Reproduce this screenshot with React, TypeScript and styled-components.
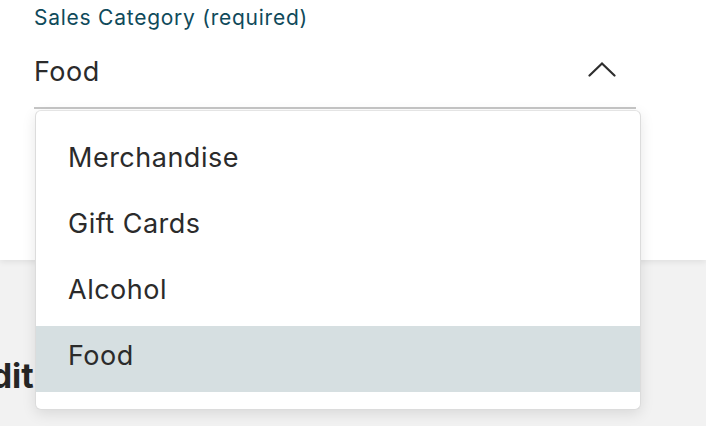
import React from "react";
import styled, { createGlobalStyle } from "styled-components";

const Global = createGlobalStyle`
  html, body { margin: 0; padding: 0; }
  body {
    background: #f2f2f2;
    font-family: Inter, "Noto Sans", "Liberation Sans", sans-serif;
    color: #2e2e2e;
    overflow: hidden;
  }
`;

const Page = styled.div`
  position: relative;
  width: 706px;
  height: 426px;
  overflow: hidden;
`;

const TopCard = styled.section`
  background: #ffffff;
  height: 260px;
  box-sizing: border-box;
  padding: 6px 70px 0 34px;
  box-shadow: 0 2px 6px rgba(0, 0, 0, 0.08);
  position: relative;
  z-index: 1;
`;

const Field = styled.div`
  width: 602px;
`;

const Label = styled.div`
  font-size: 21px;
  line-height: 24px;
  color: #0f4a5b;
  letter-spacing: 0.75px;
`;

const Trigger = styled.div`
  display: flex;
  align-items: flex-start;
  justify-content: space-between;
  height: 79px;
  box-sizing: border-box;
  padding: 0 20px 0 0;
  border-bottom: 2px solid #c6c6c6;
`;

const Value = styled.span`
  margin-top: 26px;
  font-size: 27px;
  line-height: 32px;
  letter-spacing: 0.5px;
  color: #2b2b2b;
`;

const Chevron = styled.svg`
  width: 28px;
  height: 16px;
  margin-top: 31px;
`;

const Lower = styled.section`
  padding-top: 96px;
`;

const Heading = styled.h2`
  margin: 0 0 0 -30px;
  font-size: 34px;
  line-height: 40px;
  font-weight: 700;
  color: #262626;
`;

const Menu = styled.ul`
  position: absolute;
  top: 110px;
  left: 35px;
  width: 606px;
  box-sizing: border-box;
  margin: 0;
  padding: 17px 0;
  list-style: none;
  background: #ffffff;
  border: 1px solid #dcdcdc;
  border-top-color: #e4e4e4;
  border-radius: 6px;
  box-shadow: 0 4px 14px rgba(0, 0, 0, 0.1);
  z-index: 2;
`;

const Item = styled.li<{ $selected?: boolean }>`
  height: 66px;
  box-sizing: border-box;
  padding: 0 0 6px 32px;
  font-size: 27px;
  line-height: 60px;
  letter-spacing: 0.5px;
  color: #2b2b2b;
  background: ${(p) => (p.$selected ? "#d6dfe1" : "transparent")};
`;

const options = ["Merchandise", "Gift Cards", "Alcohol", "Food"];

export default function App() {
  const selected = "Food";
  return (
    <Page>
      <Global />
      <TopCard>
        <Field>
          <Label>Sales Category (required)</Label>
          <Trigger>
            <Value>{selected}</Value>
            <Chevron viewBox="0 0 28 16" fill="none">
              <polyline
                points="1.5,14.5 14,2.5 26.5,14.5"
                stroke="#2e2e2e"
                strokeWidth="2.2"
                strokeLinecap="round"
                strokeLinejoin="miter"
              />
            </Chevron>
          </Trigger>
        </Field>
      </TopCard>
      <Lower>
        <Heading>Edit</Heading>
      </Lower>
      <Menu role="listbox">
        {options.map((o) => (
          <Item key={o} role="option" $selected={o === selected} aria-selected={o === selected}>
            {o}
          </Item>
        ))}
      </Menu>
    </Page>
  );
}
